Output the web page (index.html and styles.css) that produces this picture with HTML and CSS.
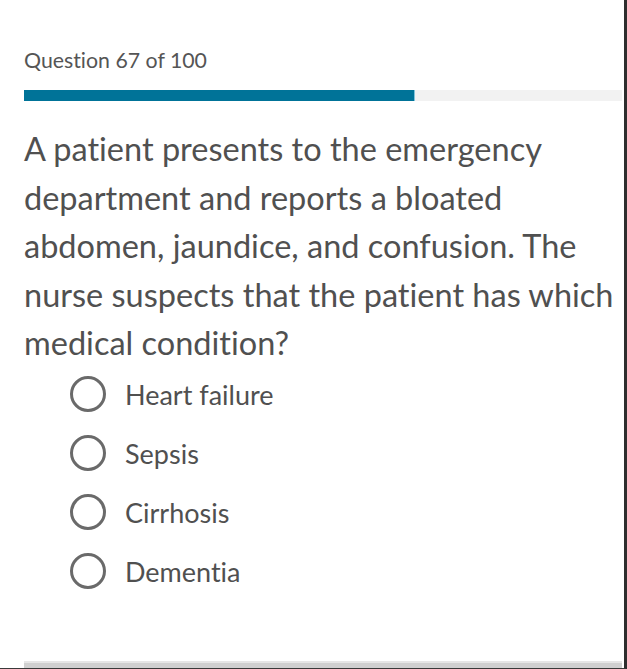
FILE: index.html
```html
<!DOCTYPE html>
<html>
<head>
<meta charset="utf-8">
<link rel="stylesheet" href="styles.css">
</head>
<body>
<div class="frame">
  <div class="content">
    <div class="counter">Question 67 of 100</div>
    <div class="progress"><div class="progress-fill" style="width:65.2%"></div></div>
    <p class="question">A patient presents to the emergency department and reports a bloated abdomen, jaundice, and confusion. The nurse suspects that the patient has which medical condition?</p>
    <ul class="options">
      <li class="option"><span class="radio"></span><span class="label">Heart failure</span></li>
      <li class="option"><span class="radio"></span><span class="label">Sepsis</span></li>
      <li class="option"><span class="radio"></span><span class="label">Cirrhosis</span></li>
      <li class="option"><span class="radio"></span><span class="label">Dementia</span></li>
    </ul>
    <div class="footer"></div>
  </div>
</div>
</body>
</html>
```
FILE: styles.css
```css
html, body {
  margin: 0;
  padding: 0;
  background: #ffffff;
}
.frame {
  box-sizing: border-box;
  width: 627px;
  height: 669px;
  border-right: 3px solid #2e2e2e;
  border-bottom: 1px solid #3a3a3a;
  overflow: hidden;
  font-family: "Lato", "Open Sans", sans-serif;
  font-variant-ligatures: none;
  color: #4d4d4d;
}
.content {
  box-sizing: border-box;
  height: 100%;
  padding: 47px 2px 0 24px;
  display: flex;
  flex-direction: column;
}
.counter {
  font-size: 21.3px;
  line-height: 26px;
  color: #555555;
}
.progress {
  margin-top: 17px;
  height: 11px;
  background: #f2f2f2;
}
.progress-fill {
  height: 100%;
  background: #007398;
  box-shadow: 1px 0 0 #7fc4dc;
}
.question {
  margin: 24px 0 0 0;
  font-size: 32.5px;
  line-height: 48.5px;
  color: #505050;
}
.options {
  list-style: none;
  margin: 9px 0 0 0;
  padding: 0 0 0 46px;
  display: flex;
  flex-direction: column;
  gap: 24px;
}
.option {
  display: flex;
  align-items: center;
  gap: 19px;
  height: 35px;
}
.radio {
  box-sizing: border-box;
  width: 36px;
  height: 36px;
  border: 3px solid #6a6a6a;
  border-radius: 50%;
  flex: none;
}
.label {
  font-size: 27px;
  color: #505050;
}
.footer {
  margin-top: auto;
  height: 5px;
  background: #d0d0d0;
  border-top: 2px solid #e6e6e6;
}
```
